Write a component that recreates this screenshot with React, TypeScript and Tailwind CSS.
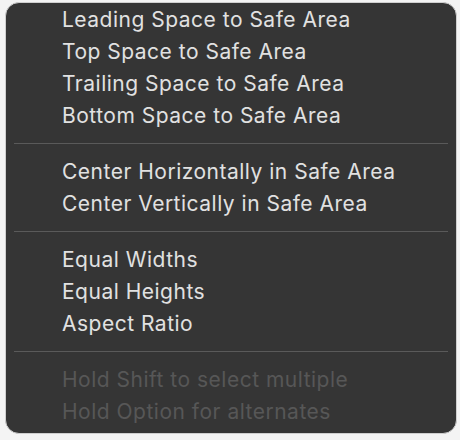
import React from 'react';

type Item = { label: string; disabled?: boolean };

const groups: Item[][] = [
  [
    { label: 'Leading Space to Safe Area' },
    { label: 'Top Space to Safe Area' },
    { label: 'Trailing Space to Safe Area' },
    { label: 'Bottom Space to Safe Area' },
  ],
  [
    { label: 'Center Horizontally in Safe Area' },
    { label: 'Center Vertically in Safe Area' },
  ],
  [{ label: 'Equal Widths' }, { label: 'Equal Heights' }, { label: 'Aspect Ratio' }],
  [
    { label: 'Hold Shift to select multiple', disabled: true },
    { label: 'Hold Option for alternates', disabled: true },
  ],
];

export default function App() {
  return (
    <div className="h-[440px] w-[460px] bg-[#f4f4f4] pl-[5px] pr-[3px] pt-[2px]">
      <div
        className="flex h-[432px] flex-col rounded-[14px] border border-[#cfcfcf] bg-[#353535] pb-[6px]"
        style={{ fontFamily: 'Inter, "Noto Sans", sans-serif' }}
      >
        {groups.map((group, gi) => (
          <div key={gi}>
            {gi > 0 && (
              <div className="flex h-[24px] items-center px-[8px]">
                <div className="h-px w-full bg-[#5a5a5a]" />
              </div>
            )}
            {group.map((item) => (
              <div
                key={item.label}
                className={
                  'flex h-[32px] items-center pl-[56px] text-[21px] leading-none tracking-[0.5px] ' +
                  (item.disabled ? 'text-[#575757]' : 'text-[#e1e1e1]')
                }
              >
                {item.label}
              </div>
            ))}
          </div>
        ))}
      </div>
    </div>
  );
}
